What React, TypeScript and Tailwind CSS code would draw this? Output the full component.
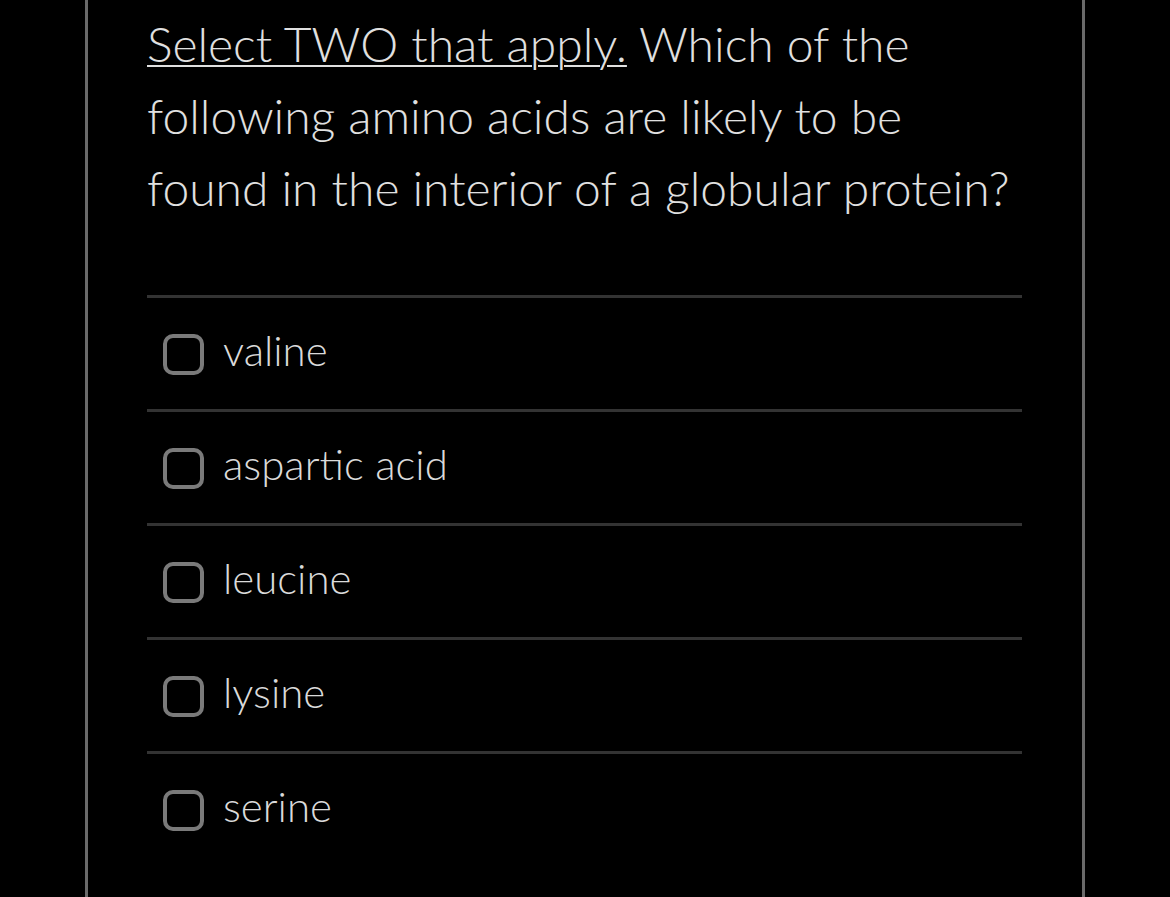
const options = ['valine', 'aspartic acid', 'leucine', 'lysine', 'serine'];

export default function App() {
  return (
    <div className="min-h-[897px] bg-black" style={{ fontFamily: '"Lato Light", Lato, "Open Sans", sans-serif' }}>
      <div className="ml-[85px] min-h-[897px] w-[1000px] border-x-[3px] border-[#6a6a6a] pl-[59px] pr-[60px] pt-[8px]">
        <p className="text-[48px] font-extralight leading-[72px] text-[#e0e0e0]">
          <span className="underline decoration-2 underline-offset-[3px]">Select TWO that apply.</span> Which of the
          following amino acids are likely to be found in the interior of a globular protein?
        </p>

        <div className="mt-[71px]">
          {options.map((opt) => (
            <label
              key={opt}
              className="flex h-[114px] items-center gap-[19px] border-t-[3px] border-[#333333] pl-[16px]"
            >
              <span className="mt-[2px] h-[41px] w-[41px] shrink-0 rounded-[10px] border-[4px] border-[#7a7a7a]" />
              <span className="-mt-[6px] text-[42px] font-extralight text-[#dadada]">{opt}</span>
            </label>
          ))}
        </div>
      </div>
    </div>
  );
}
